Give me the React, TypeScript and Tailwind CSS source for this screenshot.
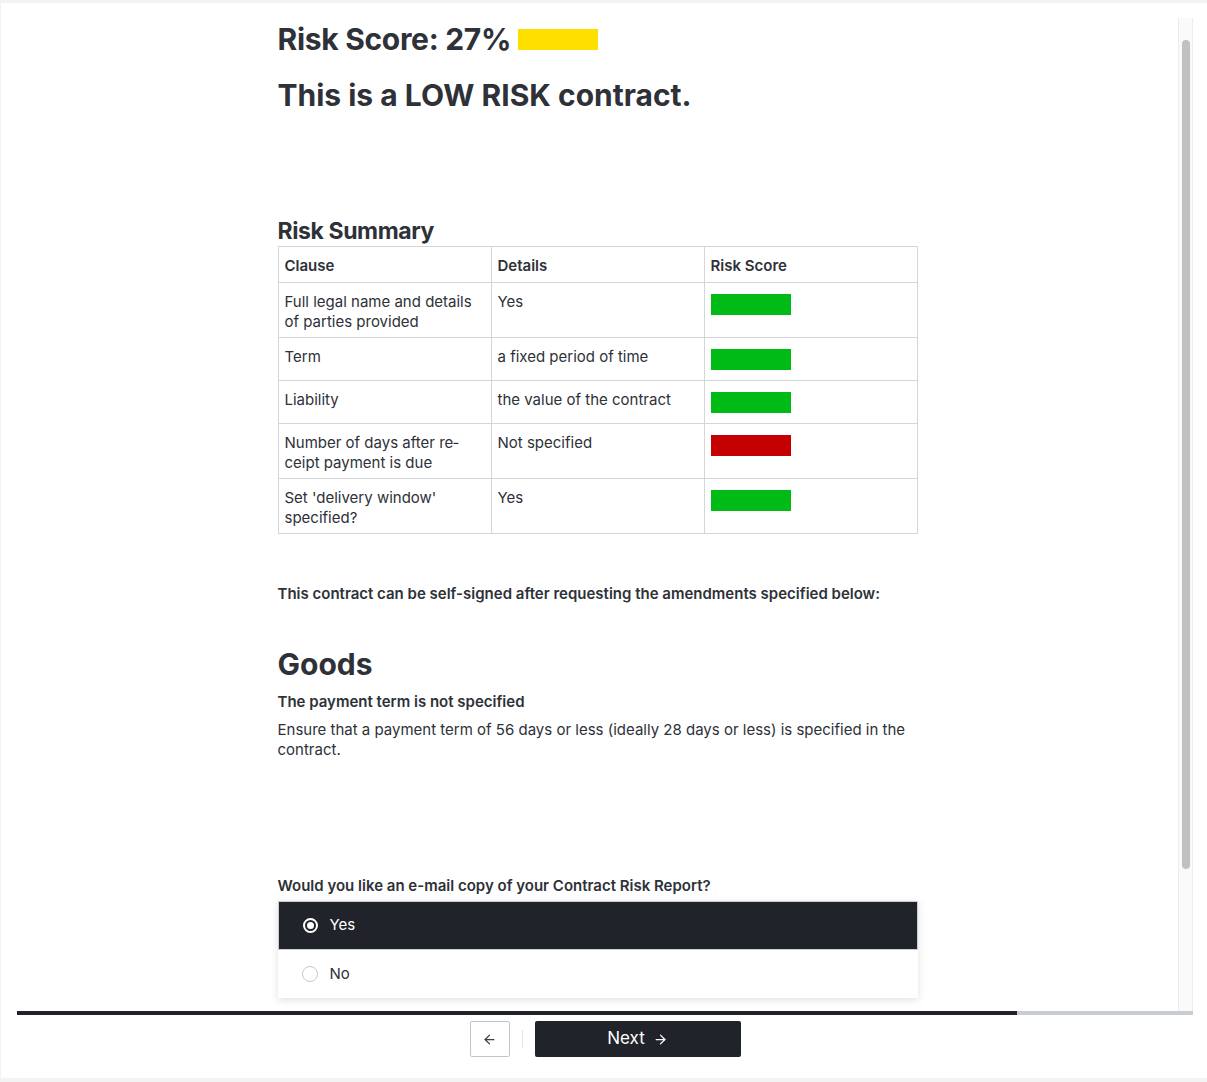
import { ArrowLeft, ArrowRight } from 'lucide-react';

const rows = [
  { clause: 'Full legal name and details of parties provided', details: 'Yes', ok: true },
  { clause: 'Term', details: 'a fixed period of time', ok: true },
  { clause: 'Liability', details: 'the value of the contract', ok: true },
  { clause: 'Number of days after re\u00ADceipt payment is due', details: 'Not specified', ok: false },
  { clause: "Set 'delivery window' specified?", details: 'Yes', ok: true },
];

export default function App() {
  return (
    <div className="min-h-[1082px] bg-[#f3f3f3] pt-[3px] pl-[1px] font-['Inter',sans-serif] text-[#2e3138]">
      <div className="h-[1075px] bg-white pl-[16px] pr-[14px] pt-[15px]">
        {/* scroll area */}
        <div className="flex h-[993px]">
          <div className="flex-1 overflow-hidden">
            <div className="mx-auto w-[640px] pt-[3px]">
              <h1 className="flex items-center gap-[7px] text-[30px] font-bold leading-[36px] tracking-[-0.3px]">
                Risk Score: 27%
                <span className="inline-block h-[21px] w-[80px] bg-[#ffdf00]" />
              </h1>
              <h2 className="mt-[20px] text-[30px] font-bold leading-[36px]">This is a LOW RISK contract.</h2>

              <h3 className="mt-[103px] text-[23px] font-bold leading-[30px] tracking-[-0.4px]">Risk Summary</h3>
              <table className="w-[640px] table-fixed border-collapse text-[15px] leading-[20px]">
                <thead>
                  <tr>
                    <th className="border border-[#d3d6db] px-[6px] pt-[9px] pb-[6px] text-left font-semibold">Clause</th>
                    <th className="border border-[#d3d6db] px-[6px] pt-[9px] pb-[6px] text-left font-semibold">Details</th>
                    <th className="border border-[#d3d6db] px-[6px] pt-[9px] pb-[6px] text-left font-semibold">Risk Score</th>
                  </tr>
                </thead>
                <tbody>
                  {rows.map((r, i) => (
                    <tr key={i}>
                      <td className="border border-[#d3d6db] px-[6px] pt-[9px] pb-[5px] align-top hyphens-manual">{r.clause}</td>
                      <td className="border border-[#d3d6db] px-[6px] pt-[9px] pb-[5px] align-top">{r.details}</td>
                      <td className="border border-[#d3d6db] px-[6px] pt-[9px] pb-[5px] align-top">
                        <div className={`mt-[2px] mb-[5px] h-[21px] w-[80px] ${r.ok ? 'bg-[#00bb16]' : 'bg-[#c40000]'}`} />
                      </td>
                    </tr>
                  ))}
                </tbody>
              </table>

              <p className="mt-[50px] text-[15px] font-semibold leading-[20px]">
                This contract can be self-signed after requesting the amendments specified below:
              </p>

              <h2 className="mt-[42px] text-[30px] font-bold leading-[36px]">Goods</h2>
              <p className="mt-[10px] text-[15px] font-semibold leading-[20px]">The payment term is not specified</p>
              <p className="mt-[8px] text-[15px] leading-[20px]">
                Ensure that a payment term of 56 days or less (ideally 28 days or less) is specified in the contract.
              </p>

              <p className="mt-[116px] text-[15px] font-semibold leading-[20px]">
                Would you like an e-mail copy of your Contract Risk Report?
              </p>
              <div className="mt-[5px] shadow-[0_2px_8px_rgba(0,0,0,0.12)]">
                <div className="flex h-[49px] items-center gap-[12px] border border-[#c9ccd2] bg-[#202329] px-[24px] text-[15px] text-white">
                  <span className="flex h-[15px] w-[15px] items-center justify-center rounded-full border-2 border-white">
                    <span className="h-[7px] w-[7px] rounded-full bg-white" />
                  </span>
                  Yes
                </div>
                <div className="flex h-[48px] items-center gap-[12px] bg-white px-[24px] text-[15px]">
                  <span className="h-[16px] w-[16px] rounded-full border border-[#c5c8ce] bg-white" />
                  No
                </div>
              </div>
            </div>
          </div>
          {/* scrollbar */}
          <div className="w-[15px] border-l border-r border-[#ececec] bg-[#fafafa] pt-[22px]">
            <div className="mx-auto h-[829px] w-[8px] rounded-full bg-[#c1c1c1]" />
          </div>
        </div>

        {/* progress */}
        <div className="flex h-[4px]">
          <div className="w-[1000px] bg-[#202329]" />
          <div className="flex-1 bg-[#c8ccd3]" />
        </div>

        {/* footer nav */}
        <div className="mt-[6px] flex items-center justify-center">
          <button className="flex h-[36px] w-[40px] items-center justify-center rounded-[2px] border border-[#c1c5cc] bg-white text-[#3a3d44]">
            <ArrowLeft className="h-[15px] w-[15px]" strokeWidth={2} />
          </button>
          <div className="mx-[12px] h-[18px] w-px bg-[#e3e5e8]" />
          <button className="flex h-[36px] w-[206px] items-center justify-center gap-[8px] rounded-[2px] bg-[#202329] text-[17px] text-white">
            Next
            <ArrowRight className="h-[15px] w-[15px]" strokeWidth={2} />
          </button>
        </div>
      </div>
    </div>
  );
}
